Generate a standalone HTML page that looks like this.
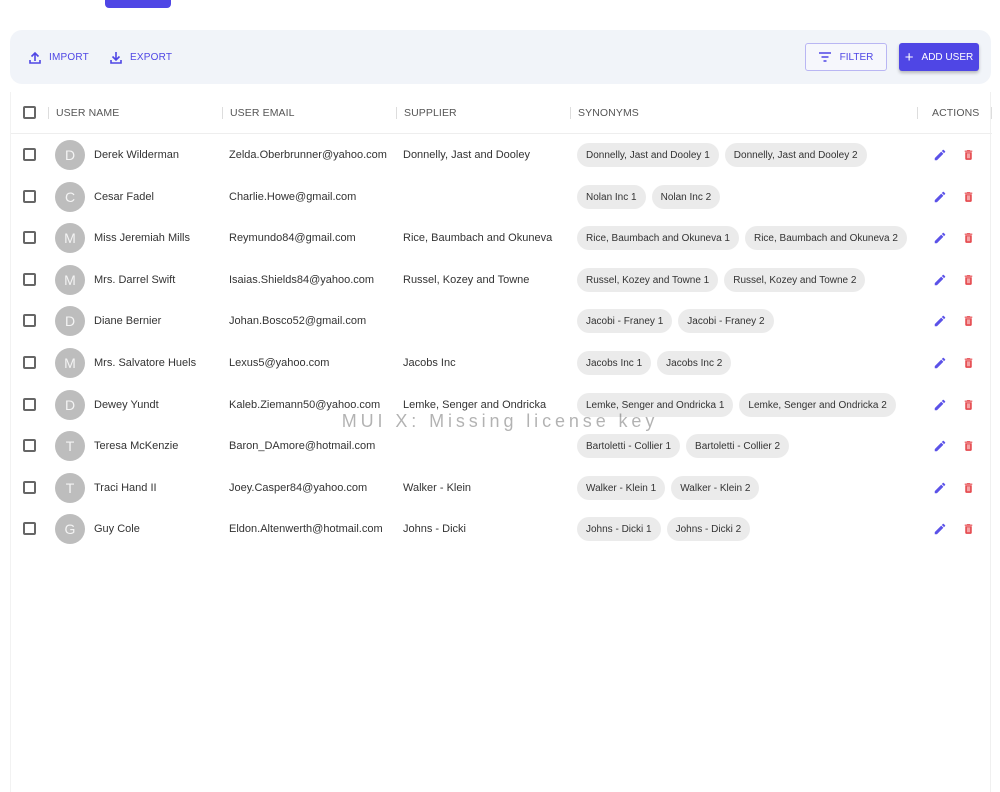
<!DOCTYPE html>
<html><head><meta charset="utf-8"><style>
*{box-sizing:border-box;margin:0;padding:0}
body{width:1000px;height:750px;overflow:hidden;background:#fff;font-family:"Liberation Sans",sans-serif;color:#333;position:relative}
.topbtn{position:absolute;left:105px;top:-6px;width:66px;height:14px;background:#4f46e5;border-radius:4px}
.toolbar{position:absolute;left:10px;top:30px;width:981px;height:54px;background:#f1f4f9;border-radius:12px}
.tb{position:absolute;top:0;height:54px;display:flex;align-items:center;font-size:10px;color:#4f46e5;letter-spacing:.2px}
.tb svg{margin-right:8px}
.filter{position:absolute;left:795px;top:13px;width:82px;height:28px;border:1px solid #b9b6f3;border-radius:3px;display:flex;align-items:center;justify-content:center;font-size:10px;color:#4f46e5;background:#f6f7fc}
.add{position:absolute;left:889px;top:13px;width:80px;height:28px;background:#4f46e5;border-radius:3px;display:flex;align-items:center;justify-content:center;font-size:10px;color:#fff;box-shadow:0 2px 3px rgba(0,0,0,.25)}
.card{position:absolute;left:10px;top:92px;width:981px;height:700px;background:#fff;border-left:1px solid #f2f2f2;border-right:1px solid #f0f0f0}
.hdr{position:absolute;left:0;top:0;width:981px;height:42px;border-bottom:1px solid #eee}
.h{position:absolute;top:0;height:42px;line-height:42px;font-size:10.5px;color:#555;letter-spacing:.1px}
.sep{position:absolute;top:15px;width:1px;height:12px;background:#ddd}
.cb{position:absolute;width:13px;height:13px;border:2px solid #666;border-radius:2px}
.row{position:absolute;left:0;width:981px;height:42px}
.row .t{position:absolute;top:0;line-height:42px;font-size:11px;color:#333;white-space:nowrap}
.av{position:absolute;left:44px;top:6px;width:30px;height:30px;border-radius:50%;background:#bdbdbd;color:#f4f4f4;font-size:14px;text-align:center;line-height:30px}
.chips{position:absolute;left:566px;top:9px;display:flex;gap:6px}
.chip{height:24px;display:flex;align-items:center;padding:1px 9px 0;border-radius:12px;background:#ebebeb;font-size:10px;color:#333;white-space:nowrap}
.ed{position:absolute;left:922px;top:14px}
.dl{position:absolute;left:951px;top:14px}
.wm{position:absolute;left:0;width:1000px;top:411px;text-align:center;font-size:18px;letter-spacing:3.9px;color:rgba(0,0,0,.3)}
</style></head><body>
<div class="topbtn"></div>
<div class="toolbar">
 <div class="tb" style="left:19px"><svg width="12" height="13" viewBox="0 0 12 13"><path d="M6 10V2M2.5 5.5L6 2l3.5 3.5M1 9v3h10V9" fill="none" stroke="#4f46e5" stroke-width="1.6"/></svg>IMPORT</div>
 <div class="tb" style="left:100px"><svg width="12" height="13" viewBox="0 0 12 13"><path d="M6 1v8M2.5 5.5L6 9l3.5-3.5M1 9v3h10V9" fill="none" stroke="#4f46e5" stroke-width="1.6"/></svg>EXPORT</div>
 <div class="filter"><svg width="12" height="10" viewBox="0 0 12 10" style="margin-right:9px"><path d="M0 1h12M2.5 5h7M4.5 9h3" stroke="#4f46e5" stroke-width="1.5"/></svg>FILTER</div>
 <div class="add"><span style="font-size:15px;margin-right:8px;line-height:1">+</span>ADD USER</div>
</div>
<div class="card">
 <div class="hdr">
  <div class="cb" style="left:12px;top:14px"></div>
  <div class="sep" style="left:37px"></div><div class="h" style="left:45px">USER NAME</div>
  <div class="sep" style="left:211px"></div><div class="h" style="left:219px">USER EMAIL</div>
  <div class="sep" style="left:385px"></div><div class="h" style="left:393px">SUPPLIER</div>
  <div class="sep" style="left:559px"></div><div class="h" style="left:567px">SYNONYMS</div>
  <div class="sep" style="left:906px"></div><div class="h" style="left:921px">ACTIONS</div>
  <div class="sep" style="left:980px"></div>
 </div>
</div>
<div class="wm">MUI X: Missing license key</div>
<script>
var d=[["D","Derek Wilderman","Zelda.Oberbrunner@yahoo.com","Donnelly, Jast and Dooley","Donnelly, Jast and Dooley"],
["C","Cesar Fadel","Charlie.Howe@gmail.com","","Nolan Inc"],
["M","Miss Jeremiah Mills","Reymundo84@gmail.com","Rice, Baumbach and Okuneva","Rice, Baumbach and Okuneva"],
["M","Mrs. Darrel Swift","Isaias.Shields84@yahoo.com","Russel, Kozey and Towne","Russel, Kozey and Towne"],
["D","Diane Bernier","Johan.Bosco52@gmail.com","","Jacobi - Franey"],
["M","Mrs. Salvatore Huels","Lexus5@yahoo.com","Jacobs Inc","Jacobs Inc"],
["D","Dewey Yundt","Kaleb.Ziemann50@yahoo.com","Lemke, Senger and Ondricka","Lemke, Senger and Ondricka"],
["T","Teresa McKenzie","Baron_DAmore@hotmail.com","","Bartoletti - Collier"],
["T","Traci Hand II","Joey.Casper84@yahoo.com","Walker - Klein","Walker - Klein"],
["G","Guy Cole","Eldon.Altenwerth@hotmail.com","Johns - Dicki","Johns - Dicki"]];
var c=document.querySelector('.card'),h='';
d.forEach(function(r,i){var top=42+i*41.6;
h+='<div class="row" style="top:'+top+'px"><div class="cb" style="left:12px;top:14px"></div><div class="av">'+r[0]+'</div><div class="t" style="left:83px">'+r[1]+'</div><div class="t" style="left:218px">'+r[2]+'</div><div class="t" style="left:392px">'+r[3]+'</div><div class="chips"><div class="chip">'+r[4]+' 1</div><div class="chip">'+r[4]+' 2</div></div>'+
'<svg class="ed" width="14" height="14" viewBox="0 0 24 24"><path fill="#5b52e8" d="M3 17.25V21h3.75L17.81 9.94l-3.75-3.75L3 17.25zM20.71 7.04a1 1 0 000-1.41l-2.34-2.34a1 1 0 00-1.41 0l-1.83 1.83 3.75 3.75 1.83-1.83z"/></svg>'+
'<svg class="dl" width="13" height="14" viewBox="0 0 24 24"><path fill="#e5484d" d="M6 19c0 1.1.9 2 2 2h8c1.1 0 2-.9 2-2V7H6v12zM19 4h-3.5l-1-1h-5l-1 1H5v2h14V4z"/><rect x="9" y="9" width="6" height="9" fill="#f4a3a5"/></svg></div>';});
c.insertAdjacentHTML('beforeend',h);
</script>
</body></html>
